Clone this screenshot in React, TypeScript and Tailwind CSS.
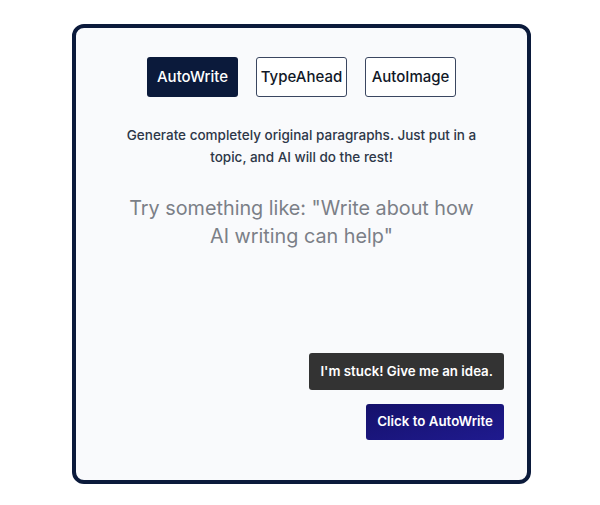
import React, { useState } from "react";

const tabs = ["AutoWrite", "TypeAhead", "AutoImage"];

export default function App() {
  const [tab, setTab] = useState("AutoWrite");
  const [text, setText] = useState("");

  return (
    <div className="w-full h-[505px] bg-white pt-[24px]" style={{ fontFamily: "Inter, 'Noto Sans', sans-serif" }}>
      <div className="ml-[72px] w-[459px] h-[460px] rounded-[12px] border-[4px] border-[#0b1a3b] bg-[#f9fafc] flex flex-col items-center px-[23px]">
        <div className="flex gap-[18px] mt-[29px]">
          {tabs.map((t) => (
            <button
              key={t}
              onClick={() => setTab(t)}
              className={`h-[40px] w-[91px] rounded-[3px] text-[15px] font-medium ${
                t === tab
                  ? "bg-[#0b1a3b] text-white"
                  : "border border-[#3a4660] text-[#111827] bg-white"
              }`}
            >
              {t}
            </button>
          ))}
        </div>
        <p className="mt-[27px] w-[360px] text-center text-[13.5px] leading-[22px] font-medium text-[#2d3748]">
          Generate completely original paragraphs. Just put in a topic, and AI will do the rest!
        </p>
        <textarea
          value={text}
          onChange={(e) => setText(e.target.value)}
          placeholder={'Try something like: "Write about how AI writing can help"'}
          className="mt-[26px] w-[360px] h-[150px] resize-none bg-transparent outline-none text-center text-[19.8px] leading-[28px] text-[#374151] placeholder:text-[#7b7f87]"
        />
        <div className="self-end flex flex-col items-end gap-[14px] mt-[9px]">
          <button className="h-[37px] px-[11px] rounded-[3px] bg-[#333333] text-white text-[13.3px] font-semibold">
            I'm stuck! Give me an idea.
          </button>
          <button className="h-[36px] px-[11px] rounded-[3px] bg-gradient-to-br from-[#15116b] to-[#1f1a8f] text-white text-[13.3px] font-semibold">
            Click to AutoWrite
          </button>
        </div>
      </div>
    </div>
  );
}
